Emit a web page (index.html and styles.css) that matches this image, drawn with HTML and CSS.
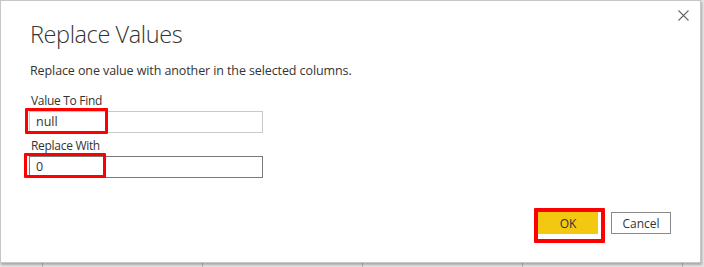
FILE: index.html
```html
<!DOCTYPE html>
<html lang="en">
<head>
    <meta charset="UTF-8">
    <title>Replace Values</title>
    <link rel="stylesheet" href="styles.css">
</head>
<body>
    <div class="dialog">
        <div class="header">
            <h1 class="title">Replace Values</h1>
            <button class="close" aria-label="Close">
                <svg width="11" height="11" viewBox="0 0 11 11">
                    <path d="M0.5 0.5 L10.5 10.5 M10.5 0.5 L0.5 10.5" stroke="#666" stroke-width="1.1" fill="none"/>
                </svg>
            </button>
        </div>

        <p class="description">Replace one value with another in the selected columns.</p>

        <div class="field">
            <label class="label">Value To Find</label>
            <div class="input-wrap">
                <div class="input">null</div>
                <span class="mark mark-find"></span>
            </div>
        </div>

        <div class="field">
            <label class="label">Replace With</label>
            <div class="input-wrap">
                <div class="input input-focus">0</div>
                <span class="mark mark-replace"></span>
            </div>
        </div>

        <div class="footer">
            <div class="btn-wrap">
                <button class="btn btn-primary">OK</button>
                <span class="mark mark-ok"></span>
            </div>
            <button class="btn">Cancel</button>
        </div>
    </div>
</body>
</html>
```

FILE: styles.css
```css
body {
    margin: 0;
    width: 704px;
    height: 267px;
    overflow: hidden;
    background-color: #e4e4e4;
    background-image: repeating-linear-gradient(90deg, transparent 0, transparent 42px, #b8b8b8 42px, #b8b8b8 43px, transparent 43px, transparent 160px);
    font-family: "Open Sans", "Noto Sans", sans-serif;
    color: #333;
}

.dialog {
    box-sizing: border-box;
    width: 701px;
    height: 263px;
    background: #fff;
    border: 1px solid #c6c6c6;
    box-shadow: 1px 2px 2px rgba(0, 0, 0, 0.25);
    padding: 0 0 0 28px;
    display: flex;
    flex-direction: column;
}

.header {
    display: flex;
    justify-content: space-between;
    align-items: flex-start;
}

.title {
    margin: 17px 0 0 1px;
    font-size: 23.5px;
    line-height: 32px;
    font-weight: 300;
    letter-spacing: -0.4px;
    color: #333;
}

.close {
    margin: 8px 10px 0 0;
    padding: 0;
    width: 13px;
    height: 13px;
    border: 0;
    background: none;
    display: flex;
    align-items: center;
    justify-content: center;
}

.description {
    margin: 12px 0 0 1px;
    font-size: 12.5px;
    line-height: 18px;
    letter-spacing: -0.1px;
}

.field {
    display: flex;
    flex-direction: column;
    margin-top: 13px;
}

.field + .field {
    margin-top: 5px;
}

.label {
    font-size: 12px;
    line-height: 16px;
    margin-bottom: 2px;
    padding-left: 2px;
    letter-spacing: -0.3px;
}

.input-wrap {
    position: relative;
    width: 234px;
}

.input {
    box-sizing: border-box;
    height: 22px;
    border: 1px solid #c8c8c8;
    padding: 0 6px;
    font-size: 12.5px;
    line-height: 20px;
}

.input-focus {
    border-color: #7a7a7a;
}

.mark {
    position: absolute;
    box-sizing: border-box;
    border: 3px solid #f00;
    border-radius: 1px;
}

.mark-find {
    left: -4px;
    top: -3px;
    width: 83px;
    height: 26px;
}

.mark-replace {
    left: -5px;
    top: -3px;
    width: 82px;
    height: 25px;
}

.footer {
    margin-top: auto;
    margin-bottom: 28px;
    margin-right: 29px;
    display: flex;
    justify-content: flex-end;
    gap: 13px;
}

.btn-wrap {
    position: relative;
}

.btn {
    box-sizing: border-box;
    width: 60px;
    height: 22px;
    margin: 0;
    padding: 0;
    border: 1px solid #8a8a8a;
    background: #fff;
    font-family: "Open Sans", "Noto Sans", sans-serif;
    font-size: 12px;
    color: #333;
    display: block;
}

.btn-primary {
    background: #f2c811;
    border-color: #f2c811;
}

.mark-ok {
    left: -4px;
    top: -4px;
    width: 71px;
    height: 35px;
    border-width: 4px;
}
```
